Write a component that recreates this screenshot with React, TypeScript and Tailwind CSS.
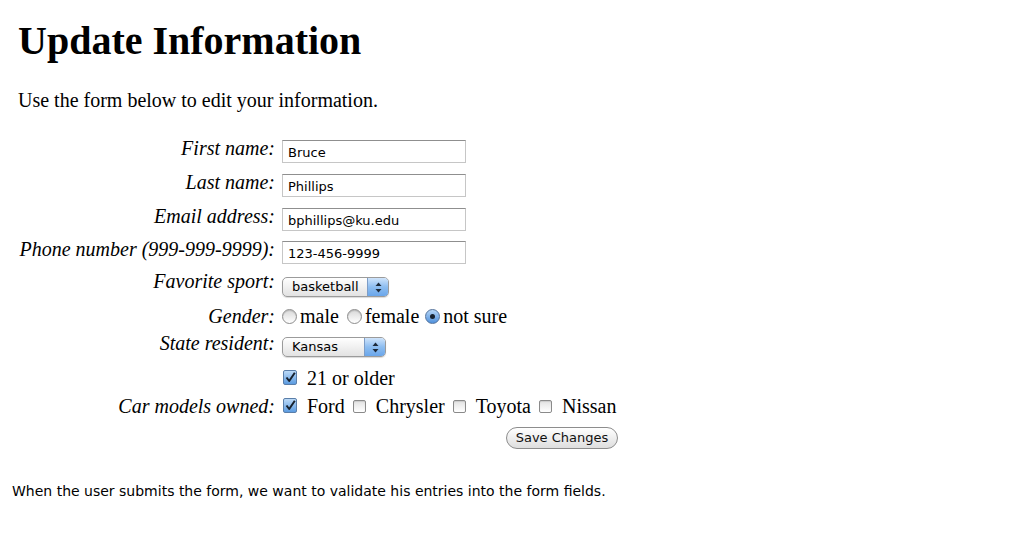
const ui = "font-['DejaVu_Sans','Verdana',sans-serif]";

function TextBox({ value }: { value: string }) {
  return (
    <input
      type="text"
      readOnly
      value={value}
      className={`mt-[3px] h-[23px] w-[184px] border border-[#c6c6c6] border-t-[#8f8f8f] bg-white px-[5px] pt-[2px] text-[13px] text-black outline-none ${ui}`}
    />
  );
}

function SelectBox({ value, width }: { value: string; width: string }) {
  return (
    <div
      className={`flex h-[20px] items-stretch overflow-hidden rounded-[5px] border border-[#9b9b9b] bg-linear-to-b from-white to-[#e2e2e2] shadow-[0_1px_1px_rgba(0,0,0,0.15)] ${width}`}
    >
      <span className={`flex-1 pl-[9px] text-[13px] leading-[18px] text-black ${ui}`}>
        {value}
      </span>
      <span className="flex w-[21px] items-center justify-center border-l border-[#7d9dc7] bg-linear-to-b from-[#cfe4fb] via-[#8dbdf0] to-[#6aa6ea]">
        <svg width="7" height="11" viewBox="0 0 7 11">
          <path d="M3.5 0.5 L6.5 4 L0.5 4 Z" fill="#1d2a3a" />
          <path d="M3.5 10.5 L6.5 7 L0.5 7 Z" fill="#1d2a3a" />
        </svg>
      </span>
    </div>
  );
}

function Radio({ checked }: { checked?: boolean }) {
  if (checked) {
    return (
      <span className="mt-[4px] flex h-[15px] w-[15px] shrink-0 items-center justify-center rounded-full border border-[#54739c] bg-linear-to-b from-[#b6d6f6] to-[#4f91dc]">
        <span className="h-[5px] w-[5px] rounded-full bg-[#17212d]" />
      </span>
    );
  }
  return (
    <span className="mt-[4px] h-[15px] w-[15px] shrink-0 rounded-full border border-[#8c8c8c] bg-linear-to-b from-[#d8d8d8] to-white shadow-[inset_0_1px_1px_rgba(0,0,0,0.15)]" />
  );
}

function Check({ checked }: { checked?: boolean }) {
  if (checked) {
    return (
      <span className="mt-[3px] ml-[1px] flex h-[15px] w-[14px] shrink-0 items-center justify-center rounded-[2px] border border-[#5a7ea9] bg-linear-to-b from-[#bcdaf7] to-[#5b9be0]">
        <svg width="11" height="11" viewBox="0 0 11 11">
          <path
            d="M1.5 5.5 L4.2 9 L9.8 0.8"
            fill="none"
            stroke="#17212d"
            strokeWidth="2"
            strokeLinejoin="round"
          />
        </svg>
      </span>
    );
  }
  return (
    <span className="mt-[5px] h-[13px] w-[13px] shrink-0 rounded-[2px] border border-[#8a8a8a] bg-linear-to-b from-[#e2e2e2] to-white shadow-[inset_0_1px_1px_rgba(0,0,0,0.1)]" />
  );
}

function Row({
  label,
  height,
  children,
}: {
  label?: string;
  height: string;
  children: React.ReactNode;
}) {
  return (
    <div className={`flex items-start ${height}`}>
      <div className="w-[276px] shrink-0 pr-[1px] text-right italic leading-[23px]">
        {label}
      </div>
      <div className="ml-[6px] flex w-[338px] items-start leading-[23px]">
        {children}
      </div>
    </div>
  );
}

export default function App() {
  return (
    <div className="min-h-[541px] w-[1030px] bg-white text-black">
      <div className="font-['Liberation_Serif','Times_New_Roman',serif] text-[20px]">
        <h1 className="ml-[18px] pt-[18px] text-[40px] leading-[46px] font-bold">
          Update Information
        </h1>
        <p className="mt-[25px] ml-[18px] leading-[23px]">
          Use the form below to edit your information.
        </p>

        {/* 폼 영역 */}
        <form className="mt-[25px]">
          <Row label="First name:" height="h-[34px]">
            <TextBox value="Bruce" />
          </Row>
          <Row label="Last name:" height="h-[34px]">
            <TextBox value="Phillips" />
          </Row>
          <Row label="Email address:" height="h-[33px]">
            <TextBox value="bphillips@ku.edu" />
          </Row>
          <Row label="Phone number (999-999-9999):" height="h-[32px]">
            <TextBox value="123-456-9999" />
          </Row>
          <Row label="Favorite sport:" height="h-[35px]">
            <div className="mt-[7px]">
              <SelectBox value="basketball" width="w-[107px]" />
            </div>
          </Row>
          <Row label="Gender:" height="h-[27px]">
            <Radio />
            <span className="ml-[3px]">male</span>
            <span className="ml-[8px] flex">
              <Radio />
            </span>
            <span className="ml-[3px]">female</span>
            <span className="ml-[6px] flex">
              <Radio checked />
            </span>
            <span className="ml-[3px]">not sure</span>
          </Row>
          <Row label="State resident:" height="h-[35px]">
            <div className="mt-[5px]">
              <SelectBox value="Kansas" width="w-[104px]" />
            </div>
          </Row>
          <Row height="h-[28px]">
            <Check checked />
            <span className="ml-[10px]">21 or older</span>
          </Row>
          <Row label="Car models owned:" height="h-[32px]">
            <Check checked />
            <span className="ml-[10px]">Ford</span>
            <span className="ml-[8px] flex">
              <Check />
            </span>
            <span className="ml-[10px]">Chrysler</span>
            <span className="ml-[8px] flex">
              <Check />
            </span>
            <span className="ml-[10px]">Toyota</span>
            <span className="ml-[8px] flex">
              <Check />
            </span>
            <span className="ml-[10px]">Nissan</span>
          </Row>
          <Row height="h-[30px]">
            <div className="flex w-full justify-end pr-[2px]">
              <button
                type="button"
                className={`h-[22px] w-[112px] rounded-full border border-[#8d8d8d] bg-linear-to-b from-white to-[#dedede] text-[13px] leading-[20px] text-[#111] ${ui}`}
              >
                Save Changes
              </button>
            </div>
          </Row>
        </form>
      </div>

      <p className={`mt-[26px] ml-[12px] text-[14px] leading-[16px] ${ui}`}>
        When the user submits the form, we want to validate his entries into the form fields.
      </p>
    </div>
  );
}
